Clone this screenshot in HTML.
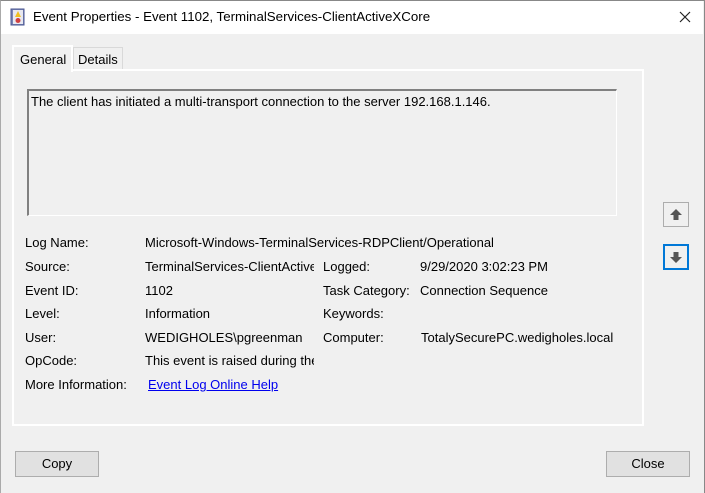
<!DOCTYPE html>
<html><head><style>
*{margin:0;padding:0;box-sizing:border-box}
body{width:705px;height:493px;overflow:hidden;background:#f0f0f0;font-family:"Liberation Sans",sans-serif;font-size:13px;color:#000;position:relative}
.a{position:absolute;white-space:nowrap}
#win{position:absolute;left:0;top:0;width:705px;height:493px;border:1px solid #888;border-bottom:none;border-left:1px solid #aaa}
#title{position:absolute;left:1px;top:1px;width:702px;height:33px;background:#fff}
.btn{position:absolute;background:#e1e1e1;border:1px solid #adadad;text-align:center;line-height:24px;font-size:13px}
</style></head><body>
<div id="win"></div>
<div id="title"></div>
<svg class="a" style="left:10px;top:8px" width="16" height="18" viewBox="0 0 16 18">
<rect x="1" y="1" width="13" height="16" fill="#7a86b8" stroke="#4a5590"/>
<rect x="3" y="2" width="10" height="14" fill="#e8e8f0"/>
<path d="M8 3 L11 9 L5 9 Z" fill="#f0c020"/>
<circle cx="8" cy="12.5" r="2.5" fill="#d04040"/>
</svg>
<div class="a" style="left:33px;top:9px;font-size:13.3px">Event Properties - Event 1102, TerminalServices-ClientActiveXCore</div>
<svg class="a" style="left:679px;top:11px" width="12" height="12"><path d="M1 1L11 11M11 1L1 11" stroke="#222" stroke-width="1.2"/></svg>

<div class="a" style="left:12px;top:69px;width:632px;height:357px;border:2px solid #fff"></div>
<div class="a" style="left:12px;top:45px;width:61px;height:27px;background:#f0f0f0;border:2px solid #fff;border-bottom:none;padding:5px 0 0 6px">General</div>
<div class="a" style="left:73px;top:47px;width:50px;height:22px;border:1px solid #d9d9d9;border-bottom:none;padding:4px 0 0 4px">Details</div>

<div class="a" style="left:27px;top:89px;width:590px;height:127px;border-top:2px solid #808080;border-left:2px solid #808080;border-right:1px solid #fff;border-bottom:1px solid #fff;padding:3px 0 0 2px">The client has initiated a multi-transport connection to the server 192.168.1.146.</div>

<div class="a" style="left:25px;top:235px">Log Name:</div>
<div class="a" style="left:25px;top:259px">Source:</div>
<div class="a" style="left:25px;top:283px">Event ID:</div>
<div class="a" style="left:25px;top:306px">Level:</div>
<div class="a" style="left:25px;top:330px">User:</div>
<div class="a" style="left:25px;top:353px">OpCode:</div>
<div class="a" style="left:25px;top:377px">More Information:</div>

<div class="a" style="left:145px;top:235px">Microsoft-Windows-TerminalServices-RDPClient/Operational</div>
<div class="a" style="left:145px;top:259px;width:169px;overflow:hidden">TerminalServices-ClientActiveXCore</div>
<div class="a" style="left:145px;top:283px">1102</div>
<div class="a" style="left:145px;top:306px">Information</div>
<div class="a" style="left:145px;top:330px">WEDIGHOLES\pgreenman</div>
<div class="a" style="left:145px;top:353px;width:169px;overflow:hidden">This event is raised during the connection</div>
<div class="a" style="left:148px;top:377px;color:#0000ee;text-decoration:underline">Event Log Online Help</div>

<div class="a" style="left:323px;top:259px">Logged:</div>
<div class="a" style="left:323px;top:283px">Task Category:</div>
<div class="a" style="left:323px;top:306px">Keywords:</div>
<div class="a" style="left:323px;top:330px">Computer:</div>
<div class="a" style="left:420px;top:259px">9/29/2020 3:02:23 PM</div>
<div class="a" style="left:420px;top:283px">Connection Sequence</div>
<div class="a" style="left:421px;top:330px">TotalySecurePC.wedigholes.local</div>

<div class="a" style="left:663px;top:202px;width:26px;height:25px;background:#f0f0f0;border:1px solid #adadad"></div>
<svg class="a" style="left:668px;top:207px" width="16" height="16"><path d="M8 2L14 8H10.5V13H5.5V8H2Z" fill="#555"/></svg>
<div class="a" style="left:663px;top:244px;width:26px;height:26px;background:#f0f0f0;border:2px solid #0078d7"></div>
<svg class="a" style="left:668px;top:249px" width="16" height="16"><path d="M8 14L14 8H10.5V3H5.5V8H2Z" fill="#555"/></svg>

<div class="btn" style="left:15px;top:451px;width:84px;height:26px">Copy</div>
<div class="btn" style="left:606px;top:451px;width:84px;height:26px">Close</div>
</body></html>
